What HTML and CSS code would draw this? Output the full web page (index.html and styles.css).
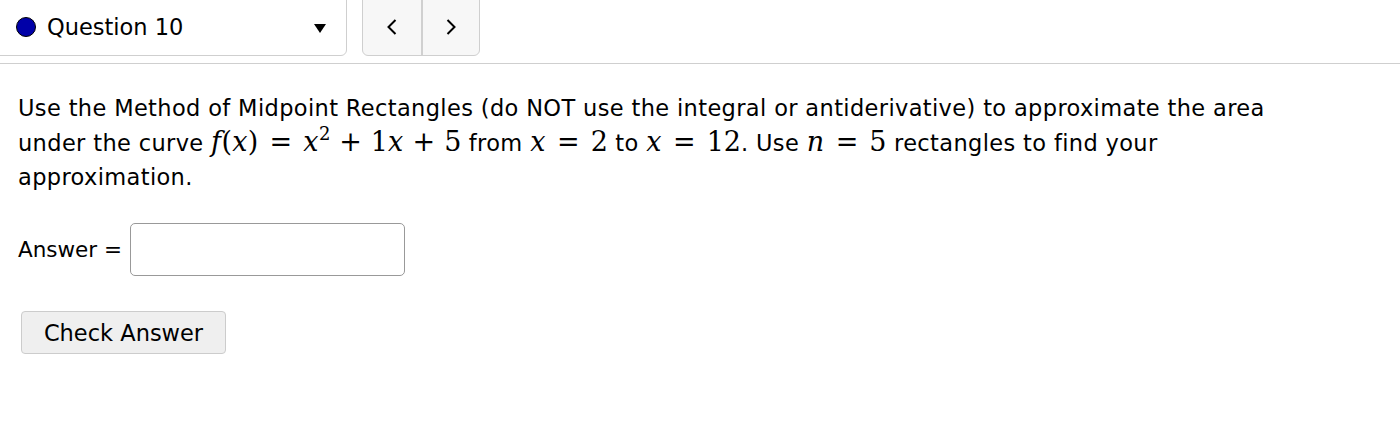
FILE: index.html
```html
<!DOCTYPE html>
<html>
<head>
<meta charset="utf-8">
<link rel="stylesheet" href="styles.css">
</head>
<body>
<div class="topbar">
  <div class="qselect">
    <span class="dot"></span>
    <span class="qlabel">Question 10</span>
    <span class="caret"></span>
  </div>
  <div class="nav">
    <button class="navbtn">
      <svg width="12" height="18" viewBox="0 0 12 18"><path d="M9.5 2 L2.5 9 L9.5 16" fill="none" stroke="#000" stroke-width="2"/></svg>
    </button>
    <button class="navbtn">
      <svg width="12" height="18" viewBox="0 0 12 18"><path d="M2.5 2 L9.5 9 L2.5 16" fill="none" stroke="#000" stroke-width="2"/></svg>
    </button>
  </div>
</div>
<div class="content">
  <p class="question">Use the Method of Midpoint Rectangles (do NOT use the integral or antiderivative) to approximate the area under the curve <span class="m"><i>f</i>(<i>x</i>)<span class="rel">=</span><i>x</i><sup>2</sup><span class="bin">+</span>1<i>x</i><span class="bin">+</span>5</span> from <span class="m"><i>x</i><span class="rel">=</span>2</span> to <span class="m"><i>x</i><span class="rel">=</span>12</span>. Use <span class="m"><i>n</i><span class="rel">=</span>5</span> rectangles to find your approximation.</p>
  <div class="answer">
    <label class="alabel">Answer =</label>
    <input class="ainput" type="text">
  </div>
  <button class="check">Check Answer</button>
</div>
</body>
</html>
```
FILE: styles.css
```css
html, body { margin: 0; padding: 0; background: #fff; }
body { font-family: "DejaVu Sans", sans-serif; color: #000; }
.topbar {
  display: flex;
  align-items: flex-start;
  height: 63px;
  border-bottom: 1px solid #cfcfcf;
}
.qselect {
  box-sizing: border-box;
  width: 349px;
  height: 58px;
  margin-left: -2px;
  margin-top: -2px;
  border: 1px solid #cfcfcf;
  border-radius: 0 0 6px 0;
  display: flex;
  align-items: center;
  padding: 0 20px 0 17px;
}
.dot {
  width: 18px; height: 18px;
  border-radius: 50%;
  background: #0000a8;
  border: 1.5px solid #000;
  flex: none;
}
.qlabel { font-size: 22.5px; margin-left: 11px; flex: 1; }
.caret {
  width: 0; height: 0;
  border-left: 6px solid transparent;
  border-right: 6px solid transparent;
  border-top: 9px solid #000;
  margin-top: 2px;
}
.nav {
  display: flex;
  margin-left: 15px;
  margin-top: -2px;
  height: 58px;
  box-sizing: border-box;
  border: 1px solid #cfcfcf;
  border-radius: 0 0 6px 6px;
  background: #f7f7f7;
  overflow: hidden;
}
.navbtn {
  width: 58px;
  border: 0;
  background: transparent;
  display: flex; align-items: center; justify-content: center;
  padding: 0;
}
.navbtn + .navbtn { border-left: 2px solid #d0d0d0; }
.content { padding: 0 18px; }
.question {
  margin: 27px 0 0 0;
  max-width: 1285px;
  font-size: 22.5px;
  letter-spacing: 0.36px;
  line-height: 34.5px;
}
.m { font-family: "DejaVu Serif", "Liberation Serif", serif; font-size: 27px; letter-spacing: 0; line-height: 1; }
.m i { letter-spacing: 0.5px; }
.m sup { font-size: 18px; line-height: 0; vertical-align: 0.62em; }
.rel { padding: 0 0.41em; }
.bin { padding: 0 0.33em; }
.answer { display: flex; align-items: center; margin-top: 28.5px; }
.alabel { font-size: 21.5px; margin-right: 8px; }
.ainput {
  box-sizing: border-box;
  width: 275px; height: 53px;
  border: 1px solid #999;
  border-radius: 5px;
  margin: 0;
}
.check {
  margin-top: 35px;
  margin-left: 3px;
  box-sizing: border-box;
  width: 205px; height: 43px;
  background: #efefef;
  border: 1px solid #cccccc;
  border-radius: 4px;
  font-family: inherit;
  font-size: 22.5px;
  color: #000;
  padding: 0;
}
```
